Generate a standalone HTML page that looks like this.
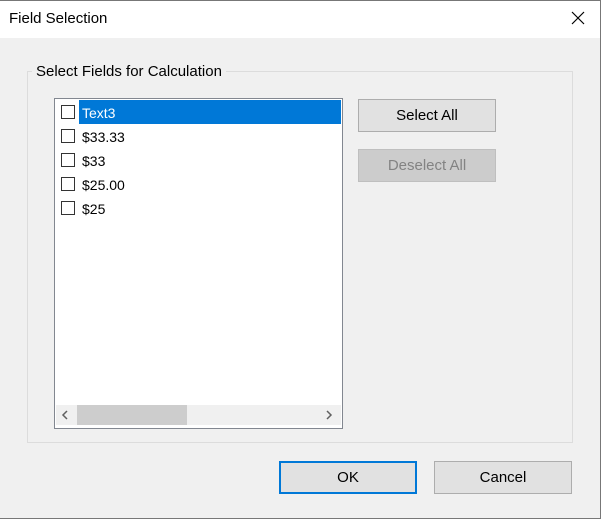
<!DOCTYPE html>
<html><head><style>
*{margin:0;padding:0;box-sizing:border-box}
body{width:601px;height:519px;overflow:hidden;background:#f0f0f0;font-family:"Liberation Sans",sans-serif;font-size:15px;color:#000;position:relative}
.a{position:absolute}
.btn{position:absolute;background:#e1e1e1;border:1px solid #adadad;text-align:center;line-height:31px;font-size:15px}
.cb{position:absolute;left:6px;width:14px;height:14px;border:1px solid #333;background:#fff}
.it{position:absolute;left:27px;font-size:14px;line-height:22px}
</style></head><body>
<div class="a" style="left:0;top:0;width:601px;height:38px;background:#fff;border-top:1px solid #777"></div>
<div class="a" style="left:9px;top:10px;font-size:15px">Field Selection</div>
<svg class="a" style="left:571px;top:11px" width="14" height="14"><path d="M1 1L13 13M13 1L1 13" stroke="#000" stroke-width="1.2"/></svg>
<div class="a" style="right:0;top:0;width:1px;height:519px;background:#777"></div>
<div class="a" style="left:0;bottom:0;width:601px;height:1px;background:#777"></div>
<div class="a" style="left:27px;top:71px;width:546px;height:372px;border:1px solid #dcdcdc"></div>
<div class="a" style="left:32px;top:63px;background:#f0f0f0;padding:0 4px">Select Fields for Calculation</div>
<div class="a" style="left:54px;top:98px;width:289px;height:331px;border:1px solid #828790;background:#fff">
<div class="a" style="left:24px;top:1px;width:262px;height:24px;background:#0078d7"></div>
<div class="cb" style="top:6px"></div><div class="it" style="top:3px;color:#fff">Text3</div>
<div class="cb" style="top:30px"></div><div class="it" style="top:27px">$33.33</div>
<div class="cb" style="top:54px"></div><div class="it" style="top:51px">$33</div>
<div class="cb" style="top:78px"></div><div class="it" style="top:75px">$25.00</div>
<div class="cb" style="top:102px"></div><div class="it" style="top:99px">$25</div>
<div class="a" style="left:1px;top:306px;width:285px;height:20px;background:#f0f0f0"></div>
<div class="a" style="left:22px;top:306px;width:110px;height:20px;background:#cdcdcd"></div>
<svg class="a" style="left:6px;top:311px" width="8" height="10"><path d="M6 1L2 5L6 9" stroke="#606060" stroke-width="1.5" fill="none"/></svg>
<svg class="a" style="left:270px;top:311px" width="8" height="10"><path d="M2 1L6 5L2 9" stroke="#606060" stroke-width="1.5" fill="none"/></svg>
</div>
<div class="btn" style="left:358px;top:99px;width:138px;height:33px">Select All</div>
<div class="btn" style="left:358px;top:149px;width:138px;height:33px;background:#cccccc;border-color:#bfbfbf;color:#838383">Deselect All</div>
<div class="btn" style="left:279px;top:461px;width:138px;height:33px;border:2px solid #0078d7;line-height:29px">OK</div>
<div class="btn" style="left:434px;top:461px;width:138px;height:33px">Cancel</div>
</body></html>
